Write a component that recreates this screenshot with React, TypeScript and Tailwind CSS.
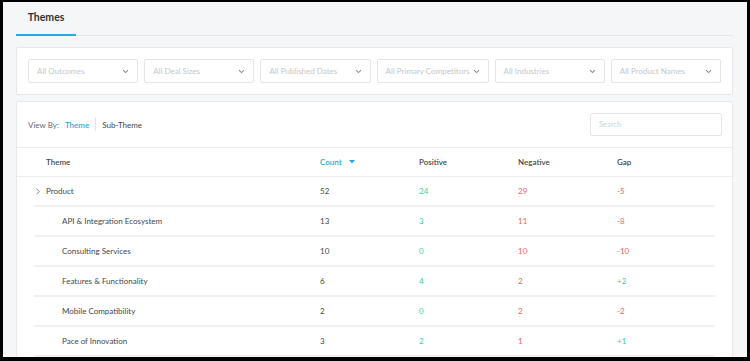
import React from "react";

const filters = [
    "All Outcomes",
    "All Deal Sizes",
    "All Published Dates",
    "All Primary Competitors",
    "All Industries",
    "All Product Names",
];

const rows = [
    { name: "API & Integration Ecosystem", count: 13, pos: 3, neg: 11, gap: "-8" },
    { name: "Consulting Services", count: 10, pos: 0, neg: 10, gap: "-10" },
    { name: "Features & Functionality", count: 6, pos: 4, neg: 2, gap: "+2" },
    { name: "Mobile Compatibility", count: 2, pos: 0, neg: 2, gap: "-2" },
    { name: "Pace of Innovation", count: 3, pos: 2, neg: 1, gap: "+1" },
];

function Chevron() {
    return (
        <svg width="7" height="5" viewBox="0 0 7 5" className="shrink-0">
            <path d="M1 1.2 L3.5 3.6 L6 1.2" fill="none" stroke="#8a8f96" strokeWidth="1.1" />
        </svg>
    );
}

function gapColor(g: string) {
    return g.startsWith("+") ? "text-[#3fd096]" : "text-[#f2616c]";
}

export default function App() {
    return (
        <div
            className="w-[750px] h-[361px] overflow-hidden bg-[#f5f6f8] border-black border-l-[3px] border-t-2 border-r-[3px] border-b-[4px] flex flex-col pl-[13px] pr-[14px] text-[#44474c]"
            style={{ fontFamily: "Lato, 'Open Sans', sans-serif" }}
        >
            {/* tabs */}
            <div className="flex border-b border-[#e2e5e9] h-[34px] shrink-0">
                <div className="w-[60px] flex items-center justify-center border-b-2 border-[#2aa9e0] -mb-px text-[10.5px] font-bold text-[#333]">
                    Themes
                </div>
            </div>

            {/* filters */}
            <div className="mt-[11px] bg-white border border-[#e6e8eb] rounded-[2px] px-[11px] py-[11px] flex gap-[6px] shrink-0">
                {filters.map((f) => (
                    <div
                        key={f}
                        className="flex-1 h-[24px] border border-[#e3e5e8] rounded-[2px] flex items-center justify-between gap-[3px] pl-[8px] pr-[8px] text-[8px] text-[#c3c7cc]"
                    >
                        <span className="whitespace-nowrap">{f}</span>
                        <Chevron />
                    </div>
                ))}
            </div>

            {/* table panel */}
            <div className="mt-[6px] bg-white border border-[#e6e8eb] rounded-[2px] flex-1 flex flex-col">
                <div className="h-[46px] border-b border-[#eceef1] flex items-center justify-between pl-[11px] pr-[10px] shrink-0">
                    <div className="flex items-center text-[8px]">
                        <span className="text-[#666a70]">View By:</span>
                        <span className="ml-[6px] text-[#2aa9e0] font-semibold">Theme</span>
                        <span className="mx-[6px] w-px h-[13px] bg-[#e1e3e6]" />
                        <span>Sub-Theme</span>
                    </div>
                    <div className="w-[132px] h-[23px] border border-[#e3e5e8] rounded-[2px] flex items-center px-[8px] text-[7.5px] text-[#cdd0d4]">
                        Search
                    </div>
                </div>

                {/* header */}
                <div className="h-[29px] border-b border-[#eceef1] px-[17px] shrink-0">
                    <div className="grid grid-cols-[286px_99px_99px_99px_1fr] h-full items-center text-[8px] font-semibold">
                        <span className="pl-[12px]">Theme</span>
                        <span className="flex items-center text-[#2aa9e0]">
                            Count
                            <svg width="6" height="4" viewBox="0 0 6 4" className="ml-[7px]">
                                <path d="M0 0 H6 L3 3.5 Z" fill="#2aa9e0" />
                            </svg>
                        </span>
                        <span>Positive</span>
                        <span>Negative</span>
                        <span>Gap</span>
                    </div>
                </div>

                {/* product row */}
                <div className="mx-[17px] h-[30px] border-b-2 border-[#f0f1f3] grid grid-cols-[286px_99px_99px_99px_1fr] items-center text-[8px] shrink-0">
                    <span className="flex items-center">
                        <svg width="4" height="7" viewBox="0 0 4 7" className="ml-[2px] mr-[6px]">
                            <path d="M0.6 0.8 L3.2 3.5 L0.6 6.2" fill="none" stroke="#6b6f75" strokeWidth="0.9" />
                        </svg>
                        Product
                    </span>
                    <span>52</span>
                    <span className="text-[#3fd096]">24</span>
                    <span className="text-[#f2616c]">29</span>
                    <span className="text-[#f2616c]">-5</span>
                </div>

                {rows.map((r) => (
                    <div
                        key={r.name}
                        className="mx-[17px] h-[30px] border-b-2 border-[#f0f1f3] grid grid-cols-[286px_99px_99px_99px_1fr] items-center text-[8px] shrink-0"
                    >
                        <span className="pl-[28px]">{r.name}</span>
                        <span>{r.count}</span>
                        <span className="text-[#3fd096]">{r.pos}</span>
                        <span className="text-[#f2616c]">{r.neg}</span>
                        <span className={gapColor(r.gap)}>{r.gap}</span>
                    </div>
                ))}
            </div>
        </div>
    );
}
